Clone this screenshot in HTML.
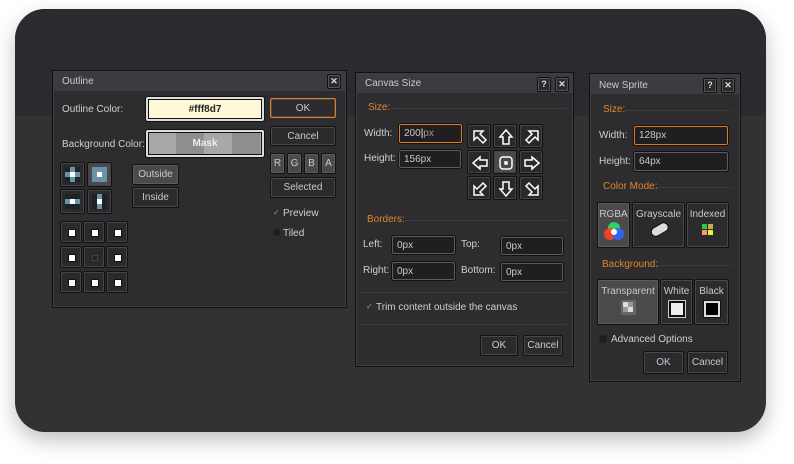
<!DOCTYPE html>
<html><head><meta charset="utf-8"><style>
*{box-sizing:border-box;margin:0;padding:0}
body{width:794px;height:464px;background:#fff;position:relative;overflow:hidden;font-family:"Liberation Sans",sans-serif;font-size:10px;color:#cfcfd2}
.card{position:absolute;left:15px;top:9px;width:751px;height:423px;border-radius:30px;background:#333233;overflow:hidden;box-shadow:0 8px 20px rgba(0,0,0,.25)}
.top{position:absolute;left:0;top:0;width:100%;height:107px;background:#2b2a2f}
.a{position:absolute}
.dlg{position:absolute;background:#2d2d30;border:1px solid #111;box-shadow:0 0 0 1px #3e3e42 inset}
.tb{position:absolute;left:1px;right:1px;top:1px;height:19px;background:#3b3c41}
.tt{position:absolute;left:8px;top:4px;color:#c9c9cc;font-size:10px}
.ib{position:absolute;width:14px;height:15px;background:#2a2a2c;border:1px solid #111;border-radius:2px;box-shadow:inset 0 0 0 1px #555;color:#ddd;font-size:9px;font-weight:bold;text-align:center;line-height:13px}
.btn,.btnl,.cf{display:flex;align-items:center;justify-content:center}
.btn{position:absolute;background:#2b2b2e;border:1px solid #111;border-radius:2px;box-shadow:inset 0 0 0 1px #48484c;color:#c9c9cc;font-size:10px}
.btnl{position:absolute;background:#4a4a4d;border:1px solid #111;border-radius:2px;box-shadow:inset 0 0 0 1px #5c5c60;color:#c9c9cc;font-size:10px}
.ic{display:block;text-align:center}
.fld{position:absolute;background:#1f1f21;border:1px solid #5c5c60;border-radius:2px;box-shadow:0 0 0 1px #111;color:#c9c9cc;font-size:10px;padding-left:4px;display:flex;align-items:center}
.or{border:1.5px solid #e07d1c}
.sec{position:absolute;color:#e3852a;font-size:10px}
.dash{position:absolute;height:0;border-top:1px dotted #4a4a4e}
.cell{position:absolute;width:22px;height:22px;background:#2a2a2d;border:1px solid #111;border-radius:2px;box-shadow:inset 0 0 0 1px #454549}
.cell i{position:absolute;left:7px;top:7px;width:8px;height:8px;background:#fff;border:1px solid #111}
.ar{position:absolute;width:24px;height:24px;background:#29292c;border:1px solid #111;border-radius:2px;box-shadow:inset 0 0 0 1px #454549}
.ar svg{position:absolute;left:3px;top:3px}
</style></head><body>
<div class="card"><div class="top"></div></div>

<!-- Outline -->
<div class="dlg" style="left:52px;top:70px;width:295px;height:238px">
 <div class="tb"><span class="tt">Outline</span></div>
 <div class="ib" style="left:274px;top:3px">✕</div>
</div>
<div class="a" style="left:62px;top:104px">Outline Color:</div>
<div class="a cf" style="left:146px;top:97px;width:118px;height:24px;background:#fff8d7;border:2px solid #ddd;border-radius:2px;box-shadow:0 0 0 1px #111,inset 0 0 0 1px #111;color:#222;font-weight:bold">#fff8d7</div>
<div class="a" style="left:62px;top:139px">Background Color:</div>
<div class="a cf" style="left:146px;top:130px;width:118px;height:27px;border:2px solid #ddd;border-radius:2px;box-shadow:0 0 0 1px #111,inset 0 0 0 1px #111;background:repeating-linear-gradient(90deg,#a8a8a8 0 28px,#8e8e8e 28px 56px);color:#eee;font-weight:bold">Mask</div>
<div class="btn or" style="left:270px;top:98px;width:66px;height:20px">OK</div>
<div class="btn" style="left:270px;top:126px;width:66px;height:20px">Cancel</div>
<div class="btnl" style="left:270px;top:153px;width:15px;height:21px">R</div>
<div class="btnl" style="left:287px;top:153px;width:15px;height:21px">G</div>
<div class="btnl" style="left:304px;top:153px;width:15px;height:21px">B</div>
<div class="btnl" style="left:321px;top:153px;width:15px;height:21px">A</div>
<div class="btn" style="left:270px;top:177px;width:66px;height:21px">Selected</div>
<div class="a" style="left:273px;top:208px;color:#e3852a;font-size:8px">✓</div>
<div class="a" style="left:283px;top:208px">Preview</div>
<div class="a" style="left:273px;top:229px;width:7px;height:7px;border-radius:50%;background:#1e1e20"></div>
<div class="a" style="left:283px;top:228px">Tiled</div>
<div class="cell" style="left:60px;top:162px;width:25px;height:25px"><svg class="a" style="left:4px;top:4px" width="15" height="15"><rect width="15" height="15" fill="#1d2226"/><rect x="5" y="0" width="5" height="15" fill="#6a93a8"/><rect x="0" y="5" width="15" height="5" fill="#6a93a8"/><rect x="5" y="5" width="5" height="5" fill="#fff"/></svg></div>
<div class="cell" style="left:87px;top:162px;width:25px;height:25px;background:#4a4a4d"><svg class="a" style="left:4px;top:4px" width="15" height="15"><rect width="15" height="15" fill="#6a93a8"/><rect x="5" y="5" width="5" height="5" fill="#fff"/></svg></div>
<div class="cell" style="left:60px;top:189px;width:25px;height:25px"><svg class="a" style="left:4px;top:4px" width="15" height="15"><rect width="15" height="15" fill="#1d2226"/><rect x="0" y="5" width="15" height="5" fill="#6a93a8"/><rect x="5" y="5" width="5" height="5" fill="#fff"/></svg></div>
<div class="cell" style="left:87px;top:189px;width:25px;height:25px"><svg class="a" style="left:4px;top:4px" width="15" height="15"><rect width="15" height="15" fill="#1d2226"/><rect x="5" y="0" width="5" height="15" fill="#6a93a8"/><rect x="5" y="5" width="5" height="5" fill="#fff"/></svg></div>
<div class="btnl" style="left:132px;top:164px;width:47px;height:21px">Outside</div>
<div class="btn" style="left:132px;top:187px;width:47px;height:21px">Inside</div>
<div class="cell" style="left:60px;top:221px"><i></i></div>
<div class="cell" style="left:83px;top:221px"><i></i></div>
<div class="cell" style="left:106px;top:221px"><i></i></div>
<div class="cell" style="left:60px;top:246px"><i></i></div>
<div class="cell" style="left:83px;top:246px"><i style="background:#222;border-color:#444;left:8px;top:8px;width:6px;height:6px"></i></div>
<div class="cell" style="left:106px;top:246px"><i></i></div>
<div class="cell" style="left:60px;top:271px"><i></i></div>
<div class="cell" style="left:83px;top:271px"><i></i></div>
<div class="cell" style="left:106px;top:271px"><i></i></div>

<!-- Canvas Size -->
<div class="dlg" style="left:355px;top:72px;width:219px;height:295px">
 <div class="tb"><span class="tt">Canvas Size</span></div>
 <div class="ib" style="left:181px;top:4px">?</div>
 <div class="ib" style="left:199px;top:4px">✕</div>
</div>
<div class="sec" style="left:368px;top:102px">Size:</div><div class="dash" style="left:392px;top:108px;width:174px"></div>
<div class="a" style="left:364px;top:128px">Width:</div>
<div class="fld or" style="left:399px;top:124px;width:63px;height:19px">200<span style="color:#fff">|</span><span style="color:#999">px</span></div>
<div class="a" style="left:364px;top:153px">Height:</div>
<div class="fld" style="left:399px;top:150px;width:62px;height:18px">156px</div>
<div class="ar" style="left:467px;top:124px"><svg width="18" height="18" fill="none" stroke="#fff" stroke-width="1.5"><path d="M3 3h9l-3 3 6 6-3 3-6-6-3 3z"/></svg></div>
<div class="ar" style="left:493px;top:124px"><svg width="18" height="18" fill="none" stroke="#fff" stroke-width="1.5"><path d="M9 2l6 7h-3v7h-6v-7h-3z"/></svg></div>
<div class="ar" style="left:519px;top:124px"><svg width="18" height="18" fill="none" stroke="#fff" stroke-width="1.5"><path d="M15 3v9l-3-3-6 6-3-3 6-6-3-3z"/></svg></div>
<div class="ar" style="left:467px;top:150px"><svg width="18" height="18" fill="none" stroke="#fff" stroke-width="1.5"><path d="M2 9l7-6v3h7v6h-7v3z"/></svg></div>
<div class="ar" style="left:493px;top:150px;background:#4a4a4d"><svg width="18" height="18" fill="none" stroke="#fff" stroke-width="1.5"><rect x="3" y="3" width="12" height="12" rx="3"/><rect x="8" y="8" width="2" height="2" fill="#fff"/></svg></div>
<div class="ar" style="left:519px;top:150px"><svg width="18" height="18" fill="none" stroke="#fff" stroke-width="1.5"><path d="M16 9l-7-6v3h-7v6h7v3z"/></svg></div>
<div class="ar" style="left:467px;top:176px"><svg width="18" height="18" fill="none" stroke="#fff" stroke-width="1.5"><path d="M3 15v-9l3 3 6-6 3 3-6 6 3 3z"/></svg></div>
<div class="ar" style="left:493px;top:176px"><svg width="18" height="18" fill="none" stroke="#fff" stroke-width="1.5"><path d="M9 16l6-7h-3v-7h-6v7h-3z"/></svg></div>
<div class="ar" style="left:519px;top:176px"><svg width="18" height="18" fill="none" stroke="#fff" stroke-width="1.5"><path d="M15 15h-9l3-3-6-6 3-3 6 6 3-3z"/></svg></div>
<div class="sec" style="left:367px;top:214px">Borders:</div><div class="dash" style="left:405px;top:220px;width:161px"></div>
<div class="a" style="left:363px;top:239px">Left:</div>
<div class="fld" style="left:392px;top:236px;width:63px;height:18px">0px</div>
<div class="a" style="left:461px;top:239px">Top:</div>
<div class="fld" style="left:501px;top:237px;width:62px;height:18px">0px</div>
<div class="a" style="left:363px;top:265px">Right:</div>
<div class="fld" style="left:392px;top:262px;width:63px;height:18px">0px</div>
<div class="a" style="left:461px;top:265px">Bottom:</div>
<div class="fld" style="left:501px;top:263px;width:62px;height:18px">0px</div>
<div class="dash" style="left:362px;top:292px;width:204px"></div>
<div class="a" style="left:366px;top:302px;color:#e3852a;font-size:8px">✓</div>
<div class="a" style="left:376px;top:302px">Trim content outside the canvas</div>
<div class="dash" style="left:362px;top:324px;width:204px"></div>
<div class="btn" style="left:480px;top:335px;width:38px;height:21px">OK</div>
<div class="btn" style="left:523px;top:335px;width:40px;height:21px">Cancel</div>

<!-- New Sprite -->
<div class="dlg" style="left:589px;top:73px;width:152px;height:309px">
 <div class="tb"><span class="tt" style="top:5px">New Sprite</span></div>
 <div class="ib" style="left:113px;top:4px">?</div>
 <div class="ib" style="left:131px;top:4px">✕</div>
</div>
<div class="sec" style="left:603px;top:104px">Size:</div><div class="dash" style="left:626px;top:110px;width:106px"></div>
<div class="a" style="left:599px;top:130px">Width:</div>
<div class="fld or" style="left:634px;top:126px;width:94px;height:19px">128px</div>
<div class="a" style="left:599px;top:156px">Height:</div>
<div class="fld" style="left:634px;top:152px;width:94px;height:19px">64px</div>
<div class="sec" style="left:603px;top:181px">Color Mode:</div><div class="dash" style="left:656px;top:187px;width:76px"></div>
<div class="btnl ic" style="left:597px;top:202px;width:33px;height:46px;padding-top:6px">RGBA
 <svg class="a" style="left:6px;top:18px" width="20" height="20"><circle cx="10" cy="7" r="6" fill="#3c6"/><circle cx="6" cy="13" r="6" fill="#f42" opacity=".9"/><circle cx="14" cy="13" r="6" fill="#36f" opacity=".9"/><circle cx="10" cy="11" r="3" fill="#fff"/></svg></div>
<div class="btn ic" style="left:632px;top:202px;width:53px;height:46px;padding-top:6px">Grayscale
 <svg class="a" style="left:16px;top:19px" width="22" height="16"><rect x="2" y="3" width="18" height="9" rx="4.5" transform="rotate(-30 11 8)" fill="#ddd" stroke="#111"/></svg></div>
<div class="btn ic" style="left:686px;top:202px;width:43px;height:46px;padding-top:6px">Indexed
 <svg class="a" style="left:15px;top:21px" width="12" height="12"><rect x="0" y="0" width="5" height="5" fill="#2c4"/><rect x="6" y="0" width="5" height="5" fill="#ca4"/><rect x="0" y="6" width="5" height="5" fill="#f95"/><rect x="6" y="6" width="5" height="5" fill="#ee4"/></svg></div>
<div class="sec" style="left:602px;top:259px">Background:</div><div class="dash" style="left:656px;top:265px;width:76px"></div>
<div class="btnl ic" style="left:597px;top:279px;width:62px;height:46px;padding-top:6px">Transparent
 <svg class="a" style="left:23px;top:20px" width="15" height="15"><rect width="15" height="15" fill="#666"/><rect x="2" y="2" width="5" height="5" fill="#ddd"/><rect x="7" y="7" width="5" height="5" fill="#ddd"/><rect x="7" y="2" width="5" height="5" fill="#999"/><rect x="2" y="7" width="5" height="5" fill="#999"/></svg></div>
<div class="btn ic" style="left:660px;top:279px;width:33px;height:46px;padding-top:6px">White
 <div class="a" style="left:8px;top:21px;width:16px;height:16px;background:#eee;border:2px solid #111;box-shadow:0 0 0 1px #ccc"></div></div>
<div class="btn ic" style="left:694px;top:279px;width:35px;height:46px;padding-top:6px">Black
 <div class="a" style="left:9px;top:21px;width:16px;height:16px;background:#000;border:2px solid #ddd;box-shadow:0 0 0 1px #111"></div></div>
<div class="a" style="left:599px;top:335px;width:8px;height:8px;border-radius:50%;background:#1e1e20"></div>
<div class="a" style="left:611px;top:334px">Advanced Options</div>
<div class="btn" style="left:643px;top:351px;width:41px;height:23px">OK</div>
<div class="btn" style="left:687px;top:351px;width:41px;height:23px">Cancel</div>
</body></html>
